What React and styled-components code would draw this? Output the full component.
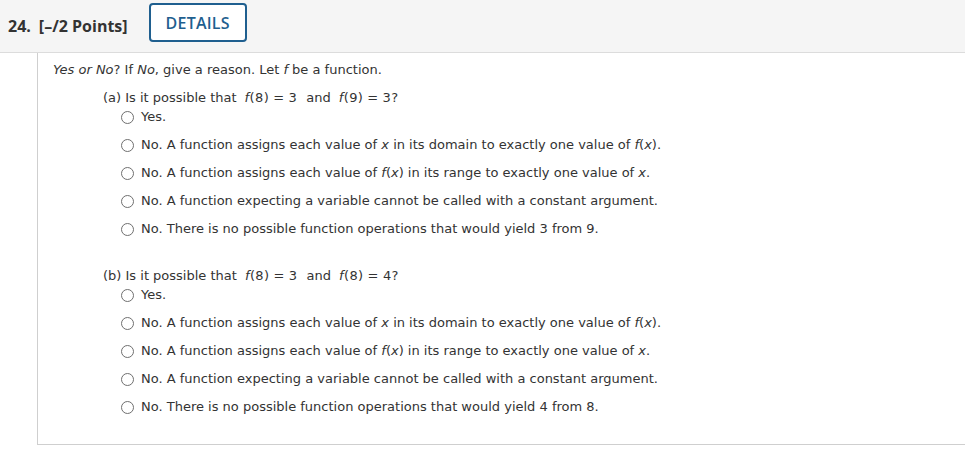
import React from 'react'
import styled, { createGlobalStyle } from 'styled-components'

const GlobalStyle = createGlobalStyle`
  html, body {
    margin: 0;
    padding: 0;
    background: #ffffff;
  }
`

const Page = styled.div`
  width: 965px;
  height: 460px;
  overflow: hidden;
  background: #ffffff;
`

const Header = styled.div`
  display: flex;
  align-items: center;
  height: 53px;
  padding-left: 8px;
  box-sizing: border-box;
  background: #f5f5f5;
  border-bottom: 1px solid #dcdcdc;
`

const Number = styled.span`
  font-family: "Open Sans", "Liberation Sans", sans-serif;
  font-weight: 700;
  font-size: 16px;
  color: #333333;
  margin-right: 8px;
`

const Points = styled.span`
  font-family: "Open Sans", "Liberation Sans", sans-serif;
  font-weight: 700;
  font-size: 16px;
  color: #333333;
  margin-right: 21px;
`

const DetailsButton = styled.button`
  width: 98px;
  height: 39px;
  margin-top: -7px;
  border: 2px solid #1f5f8f;
  border-radius: 4px;
  background: #ffffff;
  color: #1f5f8f;
  font-family: "Open Sans", "Liberation Sans", sans-serif;
  font-size: 16px;
  font-weight: 600;
  letter-spacing: 0.2px;
  padding: 0;
`

const Panel = styled.div`
  margin-left: 37px;
  height: 392px;
  border-left: 1px solid #cfcfcf;
  border-bottom: 1px solid #cfcfcf;
  padding: 9px 0 0 15px;
  box-sizing: border-box;
  font-family: "DejaVu Sans", Verdana, sans-serif;
  font-size: 13px;
  color: #333333;
`

const Intro = styled.p`
  margin: 0 0 12px;
  line-height: 16px;
`

const Part = styled.div`
  margin-left: 50px;
  margin-bottom: ${p => p.gap || 0}px;
`

const Question = styled.div`
  line-height: 16px;
`

const Options = styled.div`
  display: flex;
  flex-direction: column;
  gap: 12px;
  margin-top: 3px;
  margin-left: 18px;
`

const Option = styled.label`
  display: flex;
  align-items: center;
  gap: 7px;
  line-height: 16px;
`

const Radio = styled.span`
  width: 11px;
  height: 11px;
  border: 1.5px solid #6f6f6f;
  border-radius: 50%;
  flex-shrink: 0;
`

const Em = styled.i``

const Math = styled.span`
  margin-left: 8px;
  margin-right: ${p => (p.last ? 0 : 9)}px;
  letter-spacing: 0.4px;
`

const Eq = styled.span`
  margin: 0 4px;
`

const Fx = () => (
  <>
    <Em>f</Em>(<Em>x</Em>)
  </>
)

const options = (a, b) => [
  <>Yes.</>,
  <>No. A function assigns each value of <Em>x</Em> in its domain to exactly one value of <Fx />.</>,
  <>No. A function assigns each value of <Fx /> in its range to exactly one value of <Em>x</Em>.</>,
  <>No. A function expecting a variable cannot be called with a constant argument.</>,
  <>No. There is no possible function operations that would yield {a} from {b}.</>,
]

const parts = [
  { label: '(a)', x1: 8, y1: 3, x2: 9, y2: 3, opts: options(3, 9), gap: 31 },
  { label: '(b)', x1: 8, y1: 3, x2: 8, y2: 4, opts: options(4, 8), gap: 0 },
]

export default function App() {
  return (
    <Page>
      <GlobalStyle />
      <Header>
        <Number>24.</Number>
        <Points>[–/2 Points]</Points>
        <DetailsButton>DETAILS</DetailsButton>
      </Header>
      <Panel>
        <Intro>
          <Em>Yes</Em> <Em>or</Em> <Em>No</Em>? If <Em>No</Em>, give a reason. Let <Em>f</Em> be a function.
        </Intro>
        {parts.map(p => (
          <Part key={p.label} gap={p.gap}>
            <Question>
              {p.label} Is it possible that
              <Math><Em>f</Em>({p.x1})<Eq>=</Eq>{p.y1}</Math>and
              <Math last><Em>f</Em>({p.x2})<Eq>=</Eq>{p.y2}</Math>?
            </Question>
            <Options>
              {p.opts.map((o, i) => (
                <Option key={i}>
                  <Radio />
                  <span>{o}</span>
                </Option>
              ))}
            </Options>
          </Part>
        ))}
      </Panel>
    </Page>
  )
}
